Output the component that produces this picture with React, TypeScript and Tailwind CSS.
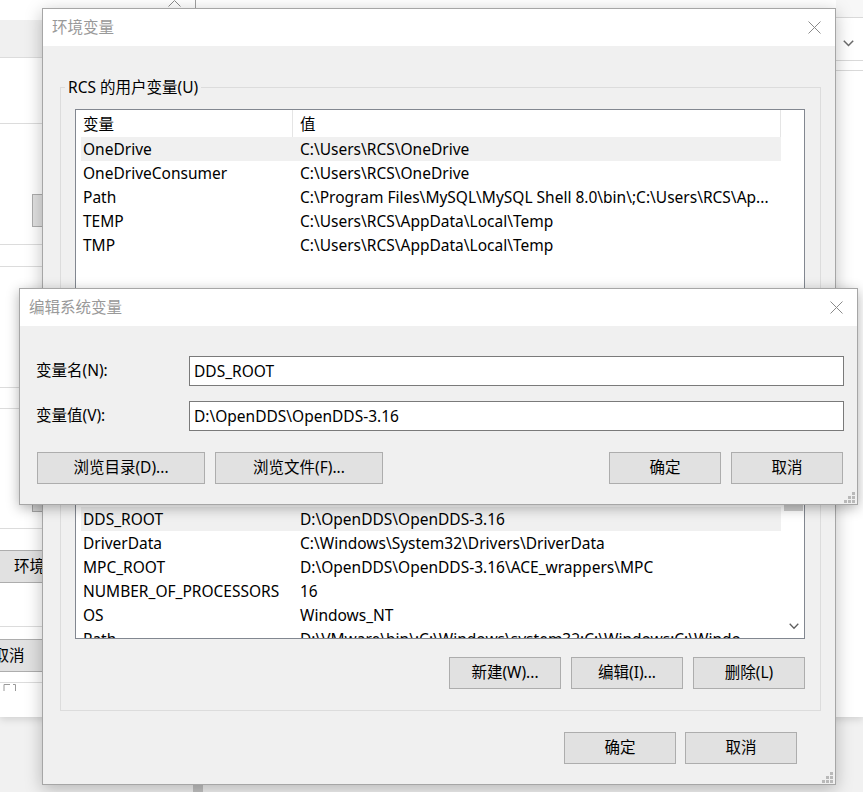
import React from "react";

type Row = [string, string];

const userRows: Row[] = [
  ["OneDrive", "C:\\Users\\RCS\\OneDrive"],
  ["OneDriveConsumer", "C:\\Users\\RCS\\OneDrive"],
  ["Path", "C:\\Program Files\\MySQL\\MySQL Shell 8.0\\bin\\;C:\\Users\\RCS\\Ap..."],
  ["TEMP", "C:\\Users\\RCS\\AppData\\Local\\Temp"],
  ["TMP", "C:\\Users\\RCS\\AppData\\Local\\Temp"],
];

const systemRows: Row[] = [
  ["ACE_ROOT", "D:\\OpenDDS\\OpenDDS-3.16\\ACE_wrappers"],
  ["ComSpec", "C:\\Windows\\system32\\cmd.exe"],
  ["DDS_ROOT", "D:\\OpenDDS\\OpenDDS-3.16"],
  ["DriverData", "C:\\Windows\\System32\\Drivers\\DriverData"],
  ["MPC_ROOT", "D:\\OpenDDS\\OpenDDS-3.16\\ACE_wrappers\\MPC"],
  ["NUMBER_OF_PROCESSORS", "16"],
  ["OS", "Windows_NT"],
  ["Path", "D:\\VMware\\bin\\;C:\\Windows\\system32;C:\\Windows;C:\\Windo..."],
  ["PATHEXT", ".COM;.EXE;.BAT;.CMD;.VBS;.VBE;.JS;.JSE;.WSF;.WSH;.MSC"],
];

function CloseIcon() {
  return (
    <svg width="13" height="13" viewBox="0 0 13 13" className="shrink-0">
      <path d="M0.5 0.5 L12.5 12.5 M12.5 0.5 L0.5 12.5" stroke="#8a8a8a" strokeWidth="1" fill="none" />
    </svg>
  );
}

function Grip({ className = "" }: { className?: string }) {
  return (
    <svg width="11" height="11" viewBox="0 0 11 11" className={className}>
      <g fill="#b9b9b9">
        <rect x="8" y="0" width="3" height="3" />
        <rect x="4" y="4" width="3" height="3" />
        <rect x="8" y="4" width="3" height="3" />
        <rect x="0" y="8" width="3" height="3" />
        <rect x="4" y="8" width="3" height="3" />
        <rect x="8" y="8" width="3" height="3" />
      </g>
    </svg>
  );
}

function Btn({ children, className = "" }: { children?: React.ReactNode; className?: string }) {
  return (
    <button
      type="button"
      className={`flex h-[32px] shrink-0 items-center justify-center border border-[#adadad] bg-[#e1e1e1] whitespace-nowrap ${className}`}
    >
      {children}
    </button>
  );
}

function TitleBar({ title }: { title: string }) {
  return (
    <div className="flex h-[37px] shrink-0 items-center justify-between bg-white pl-[9px] pr-[14px]">
      <span className="text-[#999999]">{title}</span>
      <CloseIcon />
    </div>
  );
}

function Scrollbar() {
  return (
    <div className="flex w-[21px] shrink-0 flex-col bg-white">
      <div className="h-[21px] shrink-0" />
      <div className="mx-[1px] h-[58px] shrink-0 bg-[#cdcdcd]" />
      <div className="flex-1" />
      <div className="flex h-[21px] shrink-0 items-start justify-center pt-[6px]">
        <svg width="10" height="7" viewBox="0 0 10 7">
          <path d="M0.7 0.8 L5 5.2 L9.3 0.8" stroke="#606060" strokeWidth="1.3" fill="none" />
        </svg>
      </div>
    </div>
  );
}

function ListView({ rows, selected, scroll }: { rows: Row[]; selected: number; scroll?: boolean }) {
  return (
    <div className="flex h-[208px] overflow-hidden border border-[#828790] bg-white">
      <div className="flex min-w-0 flex-1 flex-col pl-[5px]">
        <div className="flex h-[27px] shrink-0">
          <div className="flex w-[212px] shrink-0 items-center border-r border-[#e5e5e5] pl-[2px] pt-[2px]">变量</div>
          <div className="flex w-[488px] shrink-0 items-center border-r border-[#e5e5e5] pl-[7px] pt-[2px]">值</div>
        </div>
        {rows.map(([name, value], i) => (
          <div
            key={name + i}
            className={`flex h-[24px] w-[700px] shrink-0 items-center pt-[2px] ${i === selected ? "bg-[#f0f0f0]" : ""}`}
          >
            <div className="w-[212px] shrink-0 overflow-hidden whitespace-nowrap pl-[2px]">{name}</div>
            <div className="w-[488px] shrink-0 overflow-hidden whitespace-nowrap pl-[7px]">{value}</div>
          </div>
        ))}
      </div>
      {scroll && <Scrollbar />}
    </div>
  );
}

function GroupBox({
  legend,
  rows,
  selected,
  scroll,
  className = "",
}: {
  legend: string;
  rows: Row[];
  selected: number;
  scroll?: boolean;
  className?: string;
}) {
  return (
    <div className={`relative shrink-0 border border-[#dcdcdc] pb-[21px] pl-[14px] pr-[15px] pt-[21px] ${className}`}>
      <span className="absolute left-[4px] top-[-12px] bg-[#f0f0f0] px-[3px] leading-[22px]">{legend}</span>
      <ListView rows={rows} selected={selected} scroll={scroll} />
      <div className="mt-[18px] flex justify-end gap-[10px]">
        <Btn className="w-[112px]">新建(W)...</Btn>
        <Btn className="w-[112px]">编辑(I)...</Btn>
        <Btn className="w-[112px]">删除(L)</Btn>
      </div>
    </div>
  );
}

function BackgroundWindow() {
  return (
    <div className="absolute left-0 top-0 flex h-[717px] w-[863px] justify-between bg-white shadow-[0_2px_8px_rgba(0,0,0,0.15)]">
      <div className="flex w-[60px] flex-col">
        <div className="h-[20px] shrink-0" />
        <div className="h-[38px] shrink-0 border-b border-[#dcdcdc] bg-[#f0f0f0]" />
        <div className="h-[66px] shrink-0 border-b border-[#dcdcdc]" />
        <div className="h-[121px] shrink-0 border-b border-[#dcdcdc] pt-[70px]">
          <div className="ml-[32px] h-[33px] border border-[#adadad] bg-[#e1e1e1]" />
        </div>
        <div className="h-[22px] shrink-0 border-b border-[#dcdcdc]" />
        <div className="h-[121px] shrink-0 border-b border-[#dcdcdc]" />
        <div className="h-[21px] shrink-0 border-b border-[#dcdcdc]" />
        <div className="h-[120px] shrink-0 border-b border-[#dcdcdc] pt-[70px]">
          <div className="ml-[32px] h-[33px] border border-[#adadad] bg-[#e1e1e1]" />
        </div>
        <div className="h-[98px] shrink-0 border-b border-[#dcdcdc] pt-[21px]">
          <Btn className="-ml-[2px] h-[33px] w-[150px] !justify-start pl-[15px]">环境变量(N)...</Btn>
        </div>
        <div className="h-[56px] shrink-0 border-b border-[#dcdcdc] pt-[12px]">
          <Btn className="-ml-[47px] h-[33px] w-[112px]">取消</Btn>
        </div>
        <div className="pl-[3px] pt-[0px]">
          <svg width="15" height="8" viewBox="0 0 15 8">
            <path d="M1 8 V1.5 H7 M10 1.5 H12.5 V8" stroke="#9a9a9a" strokeWidth="1" fill="none" />
          </svg>
        </div>
      </div>
      <div className="flex w-[27px] flex-col">
        <div className="h-[18px] shrink-0 border-b border-[#d9d9d9] bg-[#f7f7f7]" />
        <div className="h-[43px] shrink-0 border-b border-[#d9d9d9] pl-[7px] pt-[22px]">
          <svg width="11" height="7" viewBox="0 0 11 7">
            <path d="M0.8 0.8 L5.5 5.5 L10.2 0.8" stroke="#6a6a6a" strokeWidth="1.5" fill="none" />
          </svg>
        </div>
        <div className="h-[10px] shrink-0 border-b border-[#d9d9d9]" />
      </div>
      <svg width="13" height="7" viewBox="0 0 13 7" className="absolute left-[168px] top-0">
        <path d="M0.5 6.5 L6.5 0.5 L12.5 6.5" stroke="#8a8a8a" strokeWidth="1" fill="none" />
      </svg>
      <div className="absolute left-[195px] top-0 h-[8px] w-px bg-[#a0a0a0]" />
    </div>
  );
}

function EnvDialog() {
  return (
    <div className="absolute left-[42px] top-[8px] flex h-[777px] w-[794px] flex-col border border-[#a6a6a6] bg-[#f0f0f0] shadow-[0_4px_16px_rgba(0,0,0,0.25)]">
      <TitleBar title="环境变量" />
      <div className="relative flex flex-1 flex-col pb-[20px] pl-[17px] pr-[14px] pt-[41px]">
        <GroupBox legend="RCS 的用户变量(U)" rows={userRows} selected={0} />
        <GroupBox legend="系统变量(S)" rows={systemRows} selected={2} scroll className="mt-[20px]" />
        <div className="mt-[21px] flex justify-end gap-[9px] pr-[24px]">
          <Btn className="w-[112px]">确定</Btn>
          <Btn className="w-[112px]">取消</Btn>
        </div>
        <Grip className="absolute bottom-[1px] right-[2px]" />
      </div>
    </div>
  );
}

function Field({ label, value, className = "" }: { label: string; value: string; className?: string }) {
  return (
    <div className={`flex h-[30px] shrink-0 items-center ${className}`}>
      <span className="w-[153px] shrink-0">{label}</span>
      <input
        readOnly
        value={value}
        className="h-[30px] min-w-0 flex-1 border border-[#7a7a7a] bg-white px-[4px] outline-none"
      />
    </div>
  );
}

function EditDialog() {
  return (
    <div className="absolute left-[19px] top-[288px] flex h-[217px] w-[839px] flex-col border border-[#a6a6a6] bg-[#f0f0f0] shadow-[0_3px_12px_rgba(0,0,0,0.3)]">
      <TitleBar title="编辑系统变量" />
      <div className="relative flex flex-1 flex-col pl-[16px] pr-[13px] pt-[30px]">
        <Field label="变量名(N):" value="DDS_ROOT" />
        <Field label="变量值(V):" value="D:\OpenDDS\OpenDDS-3.16" className="mt-[15px]" />
        <div className="mt-[21px] flex gap-[10px] pl-[1px] pr-[1px]">
          <Btn className="w-[168px]">浏览目录(D)...</Btn>
          <Btn className="w-[168px]">浏览文件(F)...</Btn>
          <div className="flex-1" />
          <Btn className="w-[112px]">确定</Btn>
          <Btn className="w-[112px]">取消</Btn>
        </div>
        <Grip className="absolute bottom-[1px] right-[2px]" />
      </div>
    </div>
  );
}

export default function App() {
  return (
    <div className="relative h-[792px] w-[863px] overflow-hidden bg-[#f1f1f1] font-['Noto_Sans','Noto_Sans_CJK_SC',sans-serif] text-[15.5px] text-black">
      <BackgroundWindow />
      <div className="absolute left-[193px] top-[784px] h-[8px] w-[10px] bg-[#c2c2c2]" />
      <EnvDialog />
      <EditDialog />
    </div>
  );
}
